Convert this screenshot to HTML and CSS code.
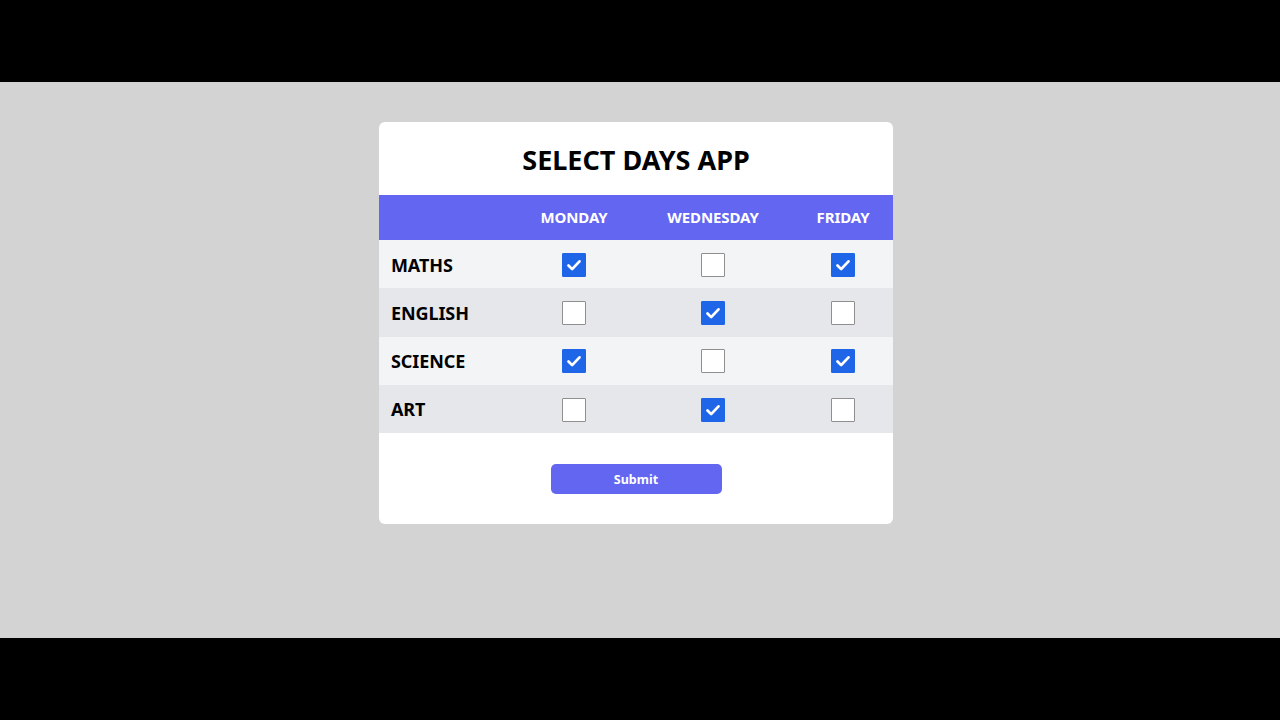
FILE: index.html
```html
<!DOCTYPE html>
<html lang="en">
<head>
<meta charset="utf-8">
<title>Select Days App</title>
<link rel="stylesheet" href="styles.css">
</head>
<body>
<main class="stage">
  <section class="card">
    <h1 class="title">SELECT DAYS APP</h1>
    <table class="grid">
      <colgroup>
        <col class="c-subject"><col class="c-mon"><col class="c-wed"><col class="c-fri">
      </colgroup>
      <thead>
        <tr><th></th><th>MONDAY</th><th>WEDNESDAY</th><th>FRIDAY</th></tr>
      </thead>
      <tbody>
        <tr>
          <td class="subject">MATHS</td>
          <td><span class="box on"><svg viewBox="0 0 24 24"><path d="M6 12.5l4 4 8-8.5"/></svg></span></td>
          <td><span class="box"></span></td>
          <td><span class="box on"><svg viewBox="0 0 24 24"><path d="M6 12.5l4 4 8-8.5"/></svg></span></td>
        </tr>
        <tr>
          <td class="subject">ENGLISH</td>
          <td><span class="box"></span></td>
          <td><span class="box on"><svg viewBox="0 0 24 24"><path d="M6 12.5l4 4 8-8.5"/></svg></span></td>
          <td><span class="box"></span></td>
        </tr>
        <tr>
          <td class="subject">SCIENCE</td>
          <td><span class="box on"><svg viewBox="0 0 24 24"><path d="M6 12.5l4 4 8-8.5"/></svg></span></td>
          <td><span class="box"></span></td>
          <td><span class="box on"><svg viewBox="0 0 24 24"><path d="M6 12.5l4 4 8-8.5"/></svg></span></td>
        </tr>
        <tr>
          <td class="subject">ART</td>
          <td><span class="box"></span></td>
          <td><span class="box on"><svg viewBox="0 0 24 24"><path d="M6 12.5l4 4 8-8.5"/></svg></span></td>
          <td><span class="box"></span></td>
        </tr>
      </tbody>
    </table>
    <div class="actions">
      <button class="submit" type="button">Submit</button>
    </div>
  </section>
</main>
</body>
</html>
```

FILE: styles.css
```css
* { box-sizing: border-box; }

html, body {
  margin: 0;
  padding: 0;
  background: #000;
  height: 720px;
  overflow: hidden;
}

body {
  font-family: "Segoe UI", "Noto Sans", "Open Sans", sans-serif;
  color: #000;
}

.stage {
  margin-top: 82px;
  height: 556px;
  background: #d3d3d3;
  padding: 40px 8px 0 0;
}

.card {
  width: 514px;
  margin: 0 auto;
  background: #fff;
  border-radius: 6px;
  overflow: hidden;
}

.title {
  margin: 0;
  text-align: center;
  font-size: 27px;
  font-weight: 700;
  line-height: 36px;
  padding: 20px 0 17px;
  letter-spacing: 0;
}

.grid {
  width: 100%;
  border-collapse: collapse;
  table-layout: fixed;
}

.c-subject { width: 136px; }
.c-mon { width: 118px; }
.c-wed { width: 160px; }
.c-fri { width: 100px; }

.grid thead tr {
  background: #6366f1;
  height: 45px;
}

.grid th {
  color: #fff;
  font-size: 15px;
  font-weight: 700;
  text-align: center;
  padding: 0 0 2px;
  letter-spacing: -0.1px;
}

.grid tbody tr { height: 48.25px; }
.grid tbody tr:nth-child(odd) { background: #f3f4f6; }
.grid tbody tr:nth-child(even) { background: #e5e7eb; }

.grid td {
  padding: 1px 0 0;
  text-align: center;
  vertical-align: middle;
}

.grid td.subject {
  text-align: left;
  padding-left: 12px;
  font-size: 18px;
  font-weight: 700;
  letter-spacing: -0.1px;
}

.box {
  display: inline-block;
  width: 24px;
  height: 24px;
  background: #fff;
  border: 1px solid #8f8f8f;
  border-radius: 1px;
  vertical-align: middle;
}

.box.on {
  background: #1f65e8;
  border-color: #1f65e8;
}

.box svg {
  display: block;
  width: 22px;
  height: 22px;
  fill: none;
  stroke: #fff;
  stroke-width: 3;
  stroke-linecap: round;
  stroke-linejoin: round;
}

.actions {
  display: flex;
  justify-content: center;
  padding: 31px 0 30px;
}

.submit {
  width: 171px;
  height: 30px;
  border: none;
  border-radius: 5px;
  background: #6366f1;
  color: #fff;
  font-family: inherit;
  font-size: 12.5px;
  font-weight: 700;
  cursor: pointer;
}
```
